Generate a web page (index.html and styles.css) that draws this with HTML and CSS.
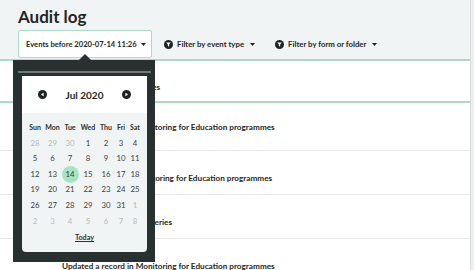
FILE: index.html
```html
<!DOCTYPE html>
<html lang="en">
  <head>
    <meta charset="UTF-8" />
    <title>Audit log</title>
    <link rel="stylesheet" href="styles.css">
  </head>
  <body>
    <div class="page">
      <div class="main">
        <div class="header">
          <h1>Audit log</h1>
          <div class="filters">
            <button class="date-btn">
              Events before 2020-07-14 11:26
              <svg class="caret" width="5" height="3" viewBox="0 0 5 3"><path d="M0 0h5L2.5 3z" /></svg>
            </button>
            <button class="filter-btn">
              <svg class="funnel" width="9" height="9" viewBox="0 0 9 9"><circle cx="4.5" cy="4.5" r="4.5" /><path d="M2.2 2.6h4.6L5.1 4.6v2.1L3.9 6V4.6z" fill="#fff" /></svg>
              Filter by event type
              <svg class="caret" width="5" height="3" viewBox="0 0 5 3"><path d="M0 0h5L2.5 3z" /></svg>
            </button>
            <button class="filter-btn">
              <svg class="funnel" width="9" height="9" viewBox="0 0 9 9"><circle cx="4.5" cy="4.5" r="4.5" /><path d="M2.2 2.6h4.6L5.1 4.6v2.1L3.9 6V4.6z" fill="#fff" /></svg>
              Filter by form or folder
              <svg class="caret" width="5" height="3" viewBox="0 0 5 3"><path d="M0 0h5L2.5 3z" /></svg>
            </button>
          </div>
        </div>

        <div class="log">
          <div class="log-head">Showing all recent changes</div>
          <div class="log-row first">Updated a record in Monitoring for Education programmes</div>
          <div class="log-row">Created a record in Monitoring for Education programmes</div>
          <div class="log-row">Updated a record in Deliveries</div>
          <div class="log-row">Updated a record in Monitoring for Education programmes</div>
        </div>

        <div class="picker">
          <div class="picker-line"></div>
          <div class="calendar">
            <div class="cal-top">
              <svg class="nav" width="9" height="9" viewBox="0 0 9 9"><circle cx="4.5" cy="4.5" r="4.5" /><path d="M2.9 4.5L5.6 2.7v3.6z" fill="#fff" /></svg>
              <span class="month">Jul 2020</span>
              <svg class="nav" width="9" height="9" viewBox="0 0 9 9"><circle cx="4.5" cy="4.5" r="4.5" /><path d="M6.1 4.5L3.4 2.7v3.6z" fill="#fff" /></svg>
            </div>
            <div class="cal-body">
              <div class="days" id="days"></div>
              <div class="today"><a href="#">Today</a></div>
            </div>
          </div>
        </div>
      </div>
      <div class="scrollbar"></div>
    </div>

    <script>
      const names = ["Sun", "Mon", "Tue", "Wed", "Thu", "Fri", "Sat"];
      const days = document.getElementById("days");

      names.forEach((n) => {
        const el = document.createElement("span");
        el.className = "day-name";
        el.textContent = n;
        days.appendChild(el);
      });

      const cells = [28, 29, 30];
      for (let d = 1; d <= 31; d++) cells.push(d);
      for (let d = 1; d <= 8; d++) cells.push(d);

      cells.forEach((d, i) => {
        const el = document.createElement("span");
        el.className = "day";
        if (i < 3 || i >= 34) el.classList.add("other");
        if (i === 16) el.classList.add("selected");
        el.textContent = d;
        days.appendChild(el);
      });
    </script>
  </body>
</html>
```

FILE: styles.css
```css
* {
  box-sizing: border-box;
}

body {
  margin: 0;
  background: #fff;
  color: #1f2524;
  font-family: Lato, "Open Sans", sans-serif;
}

.page {
  display: flex;
  height: 270px;
  overflow: hidden;
}

.main {
  flex: 1;
  position: relative;
}

.scrollbar {
  width: 4px;
  background: #eef0f0;
  border-left: 1px solid #d9dddc;
}

.header {
  background: #f1f4f5;
  padding: 7px 18px 1px;
  border-bottom: 2px solid #a9dcc2;
}

h1 {
  margin: 0;
  font-size: 17px;
  line-height: 20px;
  font-weight: 700;
}

.filters {
  display: flex;
  align-items: center;
  margin-top: 3px;
  gap: 12px;
}

button {
  font-family: inherit;
  font-size: 7.8px;
  font-weight: 700;
  color: #1f2524;
  white-space: nowrap;
  cursor: pointer;
}

.date-btn {
  display: flex;
  align-items: center;
  justify-content: space-between;
  width: 134px;
  height: 28px;
  padding: 0 5px 0 7px;
  background: #fff;
  border: 1px solid #a9dcc2;
  border-radius: 2px;
  font-size: 7.6px;
}

.filter-btn {
  display: flex;
  align-items: center;
  gap: 4px;
  padding: 0;
  background: none;
  border: none;
}

.filter-btn .caret {
  margin-left: 2px;
}

.filter-btn + .filter-btn {
  margin-left: 8px;
}

.caret path,
.funnel circle,
.nav circle {
  fill: #1f2524;
}

.log-head {
  height: 42px;
  padding: 21px 0 0 62px;
  font-size: 8.2px;
  font-weight: 700;
  border-bottom: 2px solid #a9dcc2;
}

.log-row {
  height: 44px;
  padding: 22px 0 0 62px;
  font-size: 8.2px;
  font-weight: 700;
  border-bottom: 1px solid #e6e9e9;
}

.log-row.first {
  height: 48px;
  padding-top: 19px;
}

.picker {
  position: absolute;
  left: 13px;
  top: 60px;
  width: 142px;
  height: 202px;
  padding: 11px 8px 0 9px;
  background: #283130;
}

.picker::before {
  content: "";
  position: absolute;
  left: 66px;
  top: -6px;
  border-left: 6px solid transparent;
  border-right: 6px solid transparent;
  border-bottom: 6px solid #283130;
}

.picker-line {
  margin: 0 -4px;
  height: 2px;
  background: #6e7977;
}

.calendar {
  margin-top: 3px;
  height: 176px;
  background: #f1f4f5;
  border-radius: 0 0 4px 4px;
  overflow: hidden;
}

.cal-top {
  display: flex;
  align-items: center;
  justify-content: space-between;
  height: 37px;
  padding: 0 16px 0 16px;
  background: #fff;
}

.month {
  font-size: 10px;
  font-weight: 700;
}

.cal-body {
  padding: 7px 5px 0;
}

.days {
  display: grid;
  grid-template-columns: 16px 19px 16px 20px 16px 14px 14px;
  grid-auto-rows: 15.6px;
  font-size: 7.8px;
  text-align: center;
}

.day-name {
  font-size: 7px;
  font-weight: 700;
  line-height: 15.6px;
  color: #2b3130;
}

.day {
  line-height: 15.6px;
  color: #3b4140;
}

.day.other {
  color: #b5baba;
}

.day.selected {
  justify-self: center;
  width: 17px;
  height: 17px;
  margin-top: -0.7px;
  line-height: 17px;
  border-radius: 50%;
  background: #a6e4c4;
}

.today {
  margin-top: 4px;
  text-align: center;
  font-size: 7.2px;
  font-weight: 700;
}

.today a {
  color: #2b3130;
}
```
